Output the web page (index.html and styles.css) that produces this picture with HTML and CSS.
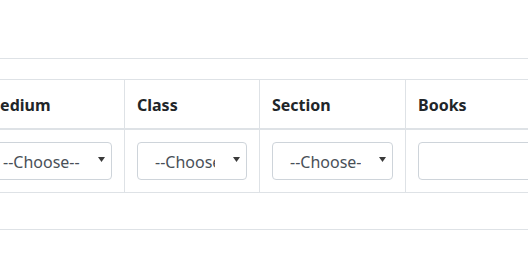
FILE: index.html
```html
<!DOCTYPE html>
<html lang="en">
<head>
<meta charset="utf-8">
<title>Books</title>
<link rel="stylesheet" href="styles.css">
</head>
<body>
<div class="modal">
  <div class="modal-header"></div>
  <div class="modal-body">
    <div class="table-scroll">
      <table class="grid">
        <colgroup>
          <col class="c1"><col class="c2"><col class="c3"><col class="c4">
        </colgroup>
        <thead>
          <tr>
            <th>Medium</th>
            <th>Class</th>
            <th>Section</th>
            <th>Books</th>
          </tr>
        </thead>
        <tbody>
          <tr>
            <td><div class="select-wrap"><select class="control"><option>--Choose--</option></select></div></td>
            <td><div class="select-wrap"><select class="control"><option>--Choose--</option></select></div></td>
            <td><div class="select-wrap"><select class="control"><option>--Choose--</option></select></div></td>
            <td><input class="control input" type="text"></td>
          </tr>
        </tbody>
      </table>
    </div>
  </div>
  <div class="modal-footer"></div>
</div>
</body>
</html>
```
FILE: styles.css
```css
html, body {
  margin: 0;
  padding: 0;
  background: #fff;
  overflow: hidden;
}
body {
  font-family: "Noto Sans", "Open Sans", "Liberation Sans", sans-serif;
  font-size: 16px;
  line-height: 24px;
  color: #212529;
}
.modal {
  width: 528px;
}
.modal-header {
  height: 58px;
  border-bottom: 1px solid #dee2e6;
}
.modal-body {
  padding: 20px 0;
}
.table-scroll {
  overflow: hidden;
}
.grid {
  border-collapse: collapse;
  table-layout: fixed;
  width: 633px;
  margin-left: -28px;
  margin-bottom: 16px;
}
.c1 { width: 152px; }
.c2 { width: 135px; }
.c3 { width: 146px; }
.c4 { width: 200px; }
.grid th,
.grid td {
  border: 1px solid #dee2e6;
  padding: 12px;
  text-align: left;
  vertical-align: top;
}
.grid th {
  font-weight: 700;
  border-bottom: 2px solid #dee2e6;
  white-space: nowrap;
  overflow: hidden;
  padding-top: 13px;
  padding-bottom: 11px;
}
.select-wrap {
  position: relative;
}
.select-wrap::after {
  content: "";
  position: absolute;
  right: 7px;
  top: 15px;
  width: 7px;
  height: 5px;
  background: #3a3a3a;
  clip-path: polygon(0 0, 100% 0, 50% 100%);
  pointer-events: none;
}
.control {
  display: block;
  box-sizing: border-box;
  width: 100%;
  height: 38px;
  margin: 0;
  border: 1px solid #ced4da;
  border-radius: 4px;
  background: #fff;
  font-family: inherit;
  font-size: 16px;
  color: #495057;
  outline: none;
}
select.control {
  -webkit-appearance: none;
  appearance: none;
  padding: 2px 31px 0 17px;
}
.input {
  padding: 0 12px;
}
.modal-footer {
  border-top: 1px solid #dee2e6;
  height: 47px;
}
```
